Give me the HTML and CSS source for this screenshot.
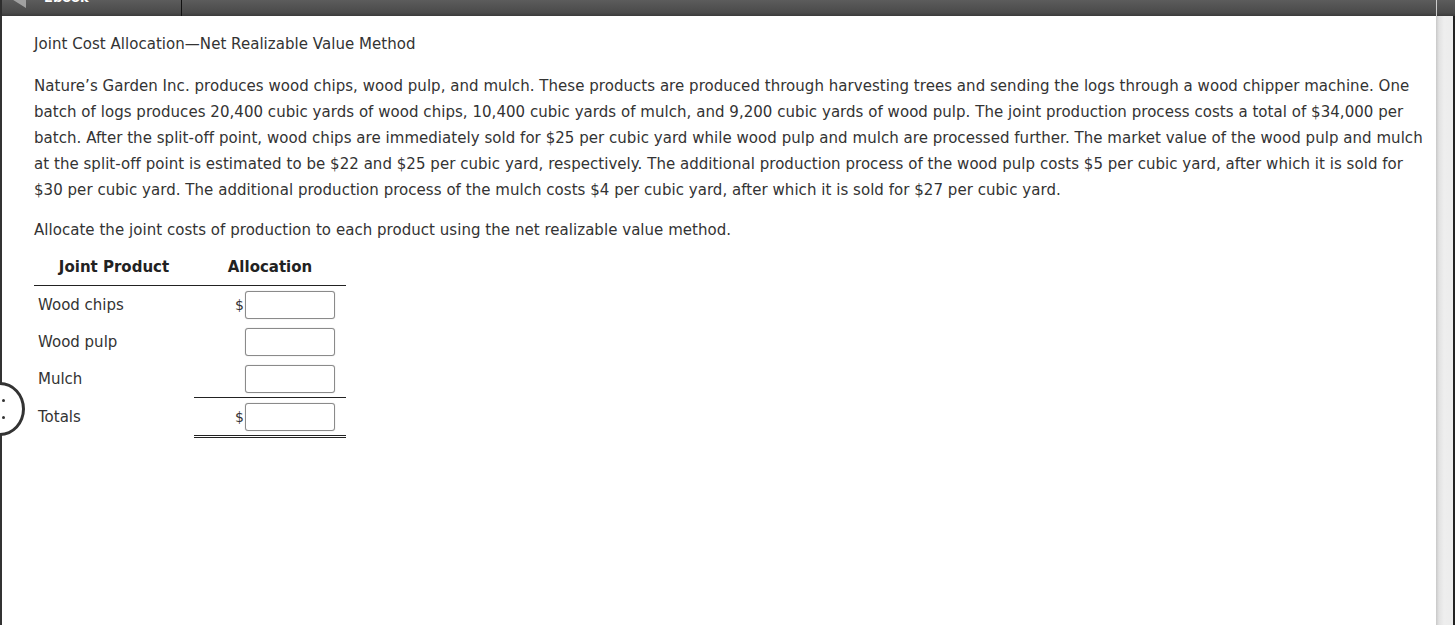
FILE: index.html
```html
<!DOCTYPE html>
<html>
<head>
<meta charset="utf-8">
<link rel="stylesheet" href="styles.css">
</head>
<body>
<div class="topbar">
  <div class="tab">
    <svg class="spk" width="30" height="16" viewBox="0 0 30 16"><path d="M4 -2 L10 -2 L20 -12 L20 8 Z" fill="#a0a0a0"/></svg>
    <span class="tabtext">Ebook</span>
  </div>
  <div class="tabrest"></div>
</div>
<div class="frame">
  <div class="content">
    <p class="title">Joint Cost Allocation—Net Realizable Value Method</p>
    <p class="para">Nature’s Garden Inc. produces wood chips, wood pulp, and mulch. These products are produced through harvesting trees and sending the logs through a wood chipper machine. One batch of logs produces 20,400 cubic yards of wood chips, 10,400 cubic yards of mulch, and 9,200 cubic yards of wood pulp. The joint production process costs a total of $34,000 per batch. After the split-off point, wood chips are immediately sold for $25 per cubic yard while wood pulp and mulch are processed further. The market value of the wood pulp and mulch at the split-off point is estimated to be $22 and $25 per cubic yard, respectively. The additional production process of the wood pulp costs $5 per cubic yard, after which it is sold for $30 per cubic yard. The additional production process of the mulch costs $4 per cubic yard, after which it is sold for $27 per cubic yard.</p>
    <p class="para2">Allocate the joint costs of production to each product using the net realizable value method.</p>
    <table class="alloc">
      <thead>
        <tr><th class="c1">Joint Product</th><th class="c2">Allocation</th></tr>
      </thead>
      <tbody>
        <tr><td class="c1">Wood chips</td><td class="c2"><span class="cur">$</span><input type="text" class="inp"></td></tr>
        <tr><td class="c1">Wood pulp</td><td class="c2"><span class="cur"></span><input type="text" class="inp"></td></tr>
        <tr><td class="c1">Mulch</td><td class="c2"><span class="cur"></span><input type="text" class="inp"></td></tr>
        <tr class="total"><td class="c1">Totals</td><td class="c2 sum"><span class="cur">$</span><input type="text" class="inp"></td></tr>
      </tbody>
    </table>
  </div>
  <div class="scroll"></div>
</div>
<div class="handle"><span class="dot"></span><span class="dot"></span></div>
</body>
</html>
```
FILE: styles.css
```css
html, body {
  margin: 0;
  padding: 0;
  background: #fff;
  height: 100%;
  overflow: hidden;
}
body {
  font-family: "DejaVu Sans", Verdana, sans-serif;
  color: #333;
  position: relative;
}
.topbar {
  height: 16px;
  display: flex;
  background: linear-gradient(#5c5c5c, #4a4a4a 80%, #3a3a3a);
  border-left: 2px solid #2e2e2e;
}
.tab {
  width: 179px;
  border-right: 1px solid #111;
  display: flex;
  align-items: flex-start;
  overflow: hidden;
  position: relative;
}
.spk {
  flex: none;
  margin-left: 4px;
}
.tabtext {
  color: #fff;
  font-weight: bold;
  font-size: 13px;
  line-height: 13px;
  margin-top: -9px;
  margin-left: 8px;
}
.tabrest {
  flex: 1;
  border-right: 1px solid #ccc;
  margin-right: 18px;
}
.frame {
  display: flex;
  height: 609px;
  border-left: 2px solid #333;
}
.content {
  flex: 1;
  padding: 0 0 0 32px;
}
.scroll {
  width: 17px;
  flex: none;
  background: linear-gradient(90deg, #c8c8c8, #e2e2e2 3px, #eeeeee 8px, #ececec);
  border-right: 2px solid #222;
}
p {
  margin: 0;
}
.title {
  font-size: 15px;
  line-height: 20px;
  margin-top: 18px;
  letter-spacing: 0.04px;
}
.para {
  font-size: 15px;
  line-height: 26px;
  margin-top: 19px;
  width: 1392px;
  letter-spacing: 0.04px;
}
.para2 {
  font-size: 15px;
  line-height: 20px;
  margin-top: 17px;
  letter-spacing: 0.04px;
}
.alloc {
  border-collapse: collapse;
  margin-top: 10px;
  font-size: 15px;
}
.alloc th {
  font-weight: bold;
  color: #222;
  line-height: 18px;
  padding: 8px 0 9px;
  border-bottom: 1px solid #222;
  vertical-align: top;
}
.alloc th.c1 {
  width: 160px;
}
.alloc th.c2 {
  width: 152px;
}
.alloc td {
  padding: 0;
  height: 37px;
  line-height: 18px;
}
.alloc td.c1 {
  padding-left: 4px;
}
.alloc td.c2 {
  text-align: right;
  padding-right: 11px;
  white-space: nowrap;
}
.alloc tr.total td.sum {
  border-top: 1px solid #222;
  border-bottom: 3px double #222;
}
.cur {
  display: inline-block;
  width: 10px;
  text-align: right;
  color: #333;
  font-size: 14px;
  vertical-align: middle;
  margin-right: 1px;
}
.inp {
  box-sizing: border-box;
  width: 90px;
  height: 28px;
  padding: 0;
  margin: 0;
  border: 1px solid #8a8a8a;
  border-radius: 3px;
  box-shadow: 0 0 1px #aaa;
  vertical-align: middle;
  background: #fff;
}
.handle {
  position: absolute;
  left: -25px;
  top: 382px;
  width: 44px;
  height: 48px;
  border: 3px solid #333;
  border-radius: 50%;
  background: #fff;
}
.dot {
  position: absolute;
  width: 3px;
  height: 3px;
  background: #333;
  border-radius: 50%;
  left: 24px;
}
.dot:first-child { top: 14px; }
.dot + .dot { top: 31px; }
```
